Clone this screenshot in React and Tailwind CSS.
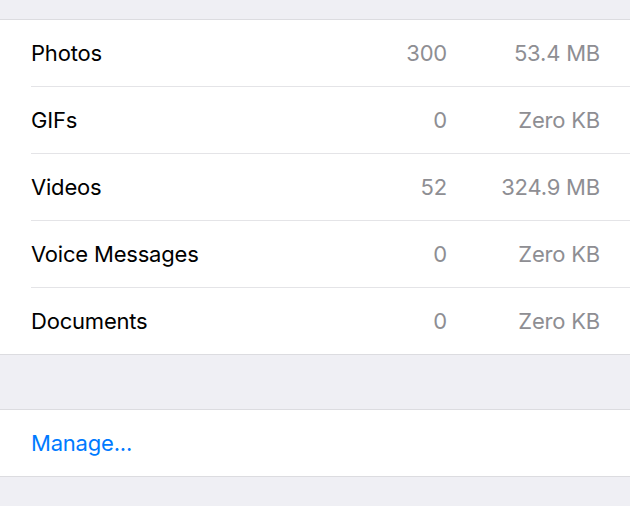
import React from "react"

const rows = [
  { label: "Photos", count: "300", size: "53.4 MB" },
  { label: "GIFs", count: "0", size: "Zero KB" },
  { label: "Videos", count: "52", size: "324.9 MB" },
  { label: "Voice Messages", count: "0", size: "Zero KB" },
  { label: "Documents", count: "0", size: "Zero KB" },
]

export default function App() {
  return (
    <div
      className="min-h-[506px] w-[630px] bg-[#efeff4] text-[22px] tracking-[-0.2px]"
      style={{ fontFamily: "Inter, 'Noto Sans', sans-serif" }}
    >
      <div className="h-[19px]" />
      <div className="border-y border-[#dcdce0] bg-white">
        {rows.map((row, i) => (
          <div key={row.label} className="pl-[31px]">
            <div
              className={`flex items-center pt-[1px] pr-[30px] ${
                i < rows.length - 1 ? "h-[67px] border-b border-[#e4e4e7]" : "h-[66px]"
              }`}
            >
              <span className="flex-1 text-black">{row.label}</span>
              <span className="w-[80px] text-right text-[#8e8e93]">{row.count}</span>
              <span className="w-[153px] text-right text-[#8e8e93]">{row.size}</span>
            </div>
          </div>
        ))}
      </div>
      <div className="h-[54px]" />
      <div className="border-y border-[#dcdce0] bg-white">
        <div className="flex h-[66px] items-center pt-[1px] pl-[31px] text-[#007aff]">Manage...</div>
      </div>
    </div>
  )
}
